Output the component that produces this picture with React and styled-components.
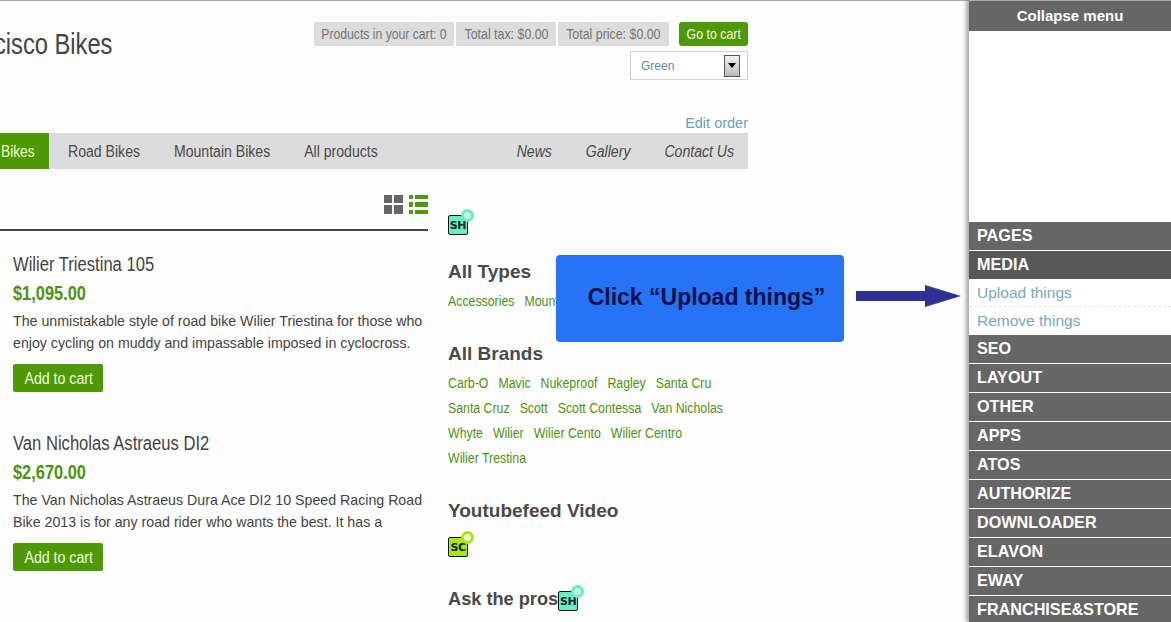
import React from "react";
import styled, { createGlobalStyle } from "styled-components";

const GREEN = "#4e9a06";
const TEXT_GREEN = "#4f9312";
const Sans = `"Liberation Sans", Arial, sans-serif`;

const Global = createGlobalStyle`
  html, body { margin: 0; padding: 0; overflow: hidden; background: #fdfdfd; }
  * { box-sizing: border-box; }
`;
const Page = styled.div`
  position: relative; display: flex; width: 1171px; height: 622px; overflow: hidden;
  font-family: ${Sans}; color: #444;
`;
const Main = styled.main`
  width: 969px; flex: none; height: 622px; border-top: 1px solid #aaa; overflow: hidden;
`;
const Shop = styled.div`width: 748px;`;
const Cond = styled.span`
  display: inline-block; flex: none; white-space: nowrap;
  transform: scaleX(${p => p.$s || 0.885}); transform-origin: ${p => p.$o || "center"};
`;
const Header = styled.header`
  display: flex; justify-content: space-between; height: 113px; padding-top: 21px;
`;
const TitleBox = styled.div`
  width: 112px; display: flex; justify-content: flex-end; white-space: nowrap; padding-top: 5px;
`;
const Title = styled.h1`
  margin: 0; font: 400 30px/34px ${Sans}; color: #444; flex: none;
  transform: scaleX(.79); transform-origin: right;
`;
const HeadRight = styled.div`display: flex; flex-direction: column; align-items: flex-end;`;
const Cart = styled.div`display: flex; height: 24px;`;
const Chip = styled.div`
  display: flex; justify-content: center; background: #dcdcdc; color: #757575; font: 14px/24px ${Sans};
  margin-right: 2px; width: ${p => p.$w}px;
`;
const CartBtn = styled.div`
  display: flex; justify-content: center; margin-left: 8px; width: 69px; background: ${GREEN}; color: #f2ffe0;
  border-radius: 3px; font: 14px/24px ${Sans};
`;
const Select = styled.div`
  margin-top: 5px; width: 118px; height: 29px; border: 1px solid #ccd3d6; background: #fff;
  display: flex; align-items: center; justify-content: space-between; padding: 0 7px 0 10px;
  font: 12px/16px ${Sans}; color: #5f8a96;
`;
const SelectBtn = styled.span`
  width: 16px; height: 22px; border: 1px solid #555; background: linear-gradient(#f2f2f2, #bbb);
  display: flex; align-items: center; justify-content: center;
`;
const Caret = styled.span`
  width: 0; height: 0; border: 4px solid transparent; border-top: 5px solid #000; border-bottom: 0;
`;
const EditRow = styled.div`text-align: right; font: 14.5px/18px ${Sans}; color: #6da3b3; height: 19px;`;
const Nav = styled.nav`
  display: flex; height: 36px; background: #dcdcdc; align-items: stretch;
  font: 16px/37px ${Sans}; color: #4a4a4a;
`;
const Active = styled.div`
  width: 49px; background: ${GREEN}; color: #eaffc8; padding-left: 1px; margin-right: 19px;
`;
const NavLeft = styled.div`
  display: flex; gap: 38.6px; white-space: nowrap; transform: scaleX(.88); transform-origin: left;
`;
const NavRight = styled.div`
  margin-left: auto; display: flex; gap: 38.6px; margin-right: 14px; font-style: italic; white-space: nowrap;
  transform: scaleX(.88); transform-origin: right;
`;
const Columns = styled.div`display: grid; grid-template-columns: 428px 300px; column-gap: 20px;`;
const Left = styled.section`padding-top: 26px;`;
const Toggle = styled.div`display: flex; justify-content: flex-end; gap: 6px; height: 34px;`;
const Rule = styled.div`height: 2px; background: #444;`;
const Product = styled.article`padding: 21px 0 0 13px; height: 179px;`;
const ProductName = styled.h3`
  margin: 0; font: 400 20px/24px ${Sans}; color: #444; white-space: nowrap;
  transform: scaleX(.83); transform-origin: left;
`;
const Price = styled.div`
  margin-top: 5px; font: 700 20px/24px ${Sans}; color: ${TEXT_GREEN};
  transform: scaleX(.82); transform-origin: left;
`;
const Desc = styled.p`
  margin: 5px 0 0; font: 14.2px/22px ${Sans}; color: #444; white-space: nowrap;
`;
const AddBtn = styled.div`
  display: flex; justify-content: center;
  margin-top: 10px; width: 90px; height: 28px; padding-left: 1px; background: ${GREEN}; color: #f2ffe0; border-radius: 2px;
  font: 16px/29px ${Sans};
`;
const Right = styled.aside`padding-top: 46px;`;
const Badge = styled.span`
  position: relative; display: inline-block; width: 20px; height: 20px; border: 1px solid #111; border-radius: 2px;
  background: ${p => p.$c}; color: #123; font: 700 11px/20px "DejaVu Sans", sans-serif; letter-spacing: -.4px;
  text-align: center; vertical-align: top; white-space: nowrap;
  &::after {
    content: ""; box-sizing: border-box; position: absolute; right: -7px; top: -7px; width: 13px; height: 13px; border-radius: 50%;
    background: ${p => p.$r}; border: 3px solid ${p => p.$c};
  }
`;
const Block = styled.div`height: ${p => p.$h}px;`;
const Heading = styled.h2`margin: 0; font: 700 19px/22px ${Sans}; color: #4a4a4a; white-space: nowrap;`;
const LastHeading = styled(Heading)`font-size: 18.2px;`;
const Tags = styled.div`
  display: flex; flex-wrap: wrap; column-gap: 11.36px; margin-top: 6px; width: 341px;
  font: 14px/25px ${Sans}; color: ${TEXT_GREEN}; transform: scaleX(.88); transform-origin: left top;
`;
const Tag = styled.span`white-space: nowrap;`;
const InlineBadge = styled(Badge)`margin-top: 3px;`;
const VideoBadge = styled(Badge)`margin-top: 15px;`;

const Sidebar = styled.div`
  width: 202px; flex: none; height: 622px; overflow: hidden; background: #fff;
  border-top: 1px solid #aaa; box-shadow: -3px 0 4px rgba(0,0,0,.35);
`;
const Collapse = styled.div`
  height: 30px; background: #666; color: #fff; font: 700 15px/30px ${Sans}; text-align: center;
`;
const Blank = styled.div`height: 191px; background: #fff;`;
const MenuItem = styled.div`
  height: 28px; margin-bottom: ${p => p.$open ? 0 : 1}px; background: ${p => p.$open ? "#585858" : "#666"}; color: #fff;
  font: 700 16.2px/27px ${Sans}; padding-left: 8px; white-space: nowrap;
`;
const Sub = styled.div`
  height: 28px; padding-left: 8px; background: #fff; color: #79a7bc; font: 15.5px/28px ${Sans};
  border-bottom: ${p => p.$last ? "none" : "1px dashed #e4e4e4"};
`;
const Callout = styled.div`
  position: absolute; left: 556px; top: 255px; width: 288px; height: 87px; border-radius: 4px; background: #2673f5;
  padding-left: 13px; color: #021048; font: 700 23px/84px ${Sans}; text-align: center; white-space: nowrap;
`;
const ArrowSvg = styled.svg`position: absolute; left: 856px; top: 284px;`;

const GridIcon = () => (
  <svg width="19" height="19" viewBox="0 0 19 19"><path fill="#666" d="M0 0h8v8H0zM10 0h9v8h-9zM0 10h8v9H0zM10 10h9v9h-9z" /></svg>
);
const ListIcon = () => (
  <svg width="19" height="19" viewBox="0 0 19 19"><path fill={GREEN} d="M0 0h4v4H0zM6 0h13v4H6zM0 7h4v5H0zM6 7h13v5H6zM0 15h4v4H0zM6 15h13v4H6z" /></svg>
);

const rest = ["SEO", "LAYOUT", "OTHER", "APPS", "ATOS", "AUTHORIZE", "DOWNLOADER", "ELAVON", "EWAY", "FRANCHISE&STORE"];
const brands = ["Carb-O", "Mavic", "Nukeproof", "Ragley", "Santa Cru", "Santa Cruz", "Scott", "Scott Contessa", "Van Nicholas", "Whyte", "Wilier", "Wilier Cento", "Wilier Centro", "Wilier Trestina"];

export default function App() {
  return (
    <Page>
      <Global />
      <Main>
        <Shop>
          <Header>
            <TitleBox><Title>San Francisco Bikes</Title></TitleBox>
            <HeadRight>
              <Cart>
                <Chip $w={140}><Cond $s={0.87}>Products in your cart: 0</Cond></Chip>
                <Chip $w={100}><Cond>Total tax: $0.00</Cond></Chip>
                <Chip $w={111}><Cond>Total price: $0.00</Cond></Chip>
                <CartBtn><Cond>Go to cart</Cond></CartBtn>
              </Cart>
              <Select>Green<SelectBtn><Caret /></SelectBtn></Select>
            </HeadRight>
          </Header>
          <EditRow>Edit order</EditRow>
          <Nav>
            <Active><Cond $s={0.86} $o="left">Bikes</Cond></Active>
            <NavLeft><span>Road Bikes</span><span>Mountain Bikes</span><span>All products</span></NavLeft>
            <NavRight><span>News</span><span>Gallery</span><span>Contact Us</span></NavRight>
          </Nav>
          <Columns>
            <Left>
              <Toggle><GridIcon /><ListIcon /></Toggle>
              <Rule />
              <Product>
                <ProductName>Wilier Triestina 105</ProductName>
                <Price>$1,095.00</Price>
                <Desc>The unmistakable style of road bike Wilier Triestina for those who<br />enjoy cycling on muddy and impassable imposed in cyclocross.</Desc>
                <AddBtn><Cond>Add to cart</Cond></AddBtn>
              </Product>
              <Product>
                <ProductName>Van Nicholas Astraeus DI2</ProductName>
                <Price>$2,670.00</Price>
                <Desc>The Van Nicholas Astraeus Dura Ace DI2 10 Speed Racing Road<br />Bike 2013 is for any road rider who wants the best. It has a</Desc>
                <AddBtn><Cond>Add to cart</Cond></AddBtn>
              </Product>
            </Left>
            <Right>
              <Block $h={46}><Badge $c="#66eec0" $r="#c9f3e4">SH</Badge></Block>
              <Block $h={82}>
                <Heading>All Types</Heading>
                <Tags><Tag>Accessories</Tag><Tag>Mountain</Tag><Tag>Road</Tag><Tag>Track</Tag></Tags>
              </Block>
              <Block $h={157}>
                <Heading>All Brands</Heading>
                <Tags>{brands.map(b => <Tag key={b}>{b}</Tag>)}</Tags>
              </Block>
              <Block $h={88}>
                <Heading>Youtubefeed Video</Heading>
                <VideoBadge $c="#a8e80e" $r="#f4fbe0">SC</VideoBadge>
              </Block>
              <LastHeading>Ask the pros<InlineBadge $c="#66eec0" $r="#c9f3e4">SH</InlineBadge></LastHeading>
            </Right>
          </Columns>
        </Shop>
      </Main>
      <Sidebar>
        <Collapse>Collapse menu</Collapse>
        <Blank />
        <MenuItem>PAGES</MenuItem>
        <MenuItem $open>MEDIA</MenuItem>
        <Sub>Upload things</Sub>
        <Sub $last>Remove things</Sub>
        {rest.map(m => <MenuItem key={m}>{m}</MenuItem>)}
      </Sidebar>
      <Callout>Click “Upload things”</Callout>
      <ArrowSvg width="106" height="24" viewBox="0 0 106 24"><path fill="#2e3192" d="M0 7h69V1l36 11-36 11v-6H0z" /></ArrowSvg>
    </Page>
  );
}
